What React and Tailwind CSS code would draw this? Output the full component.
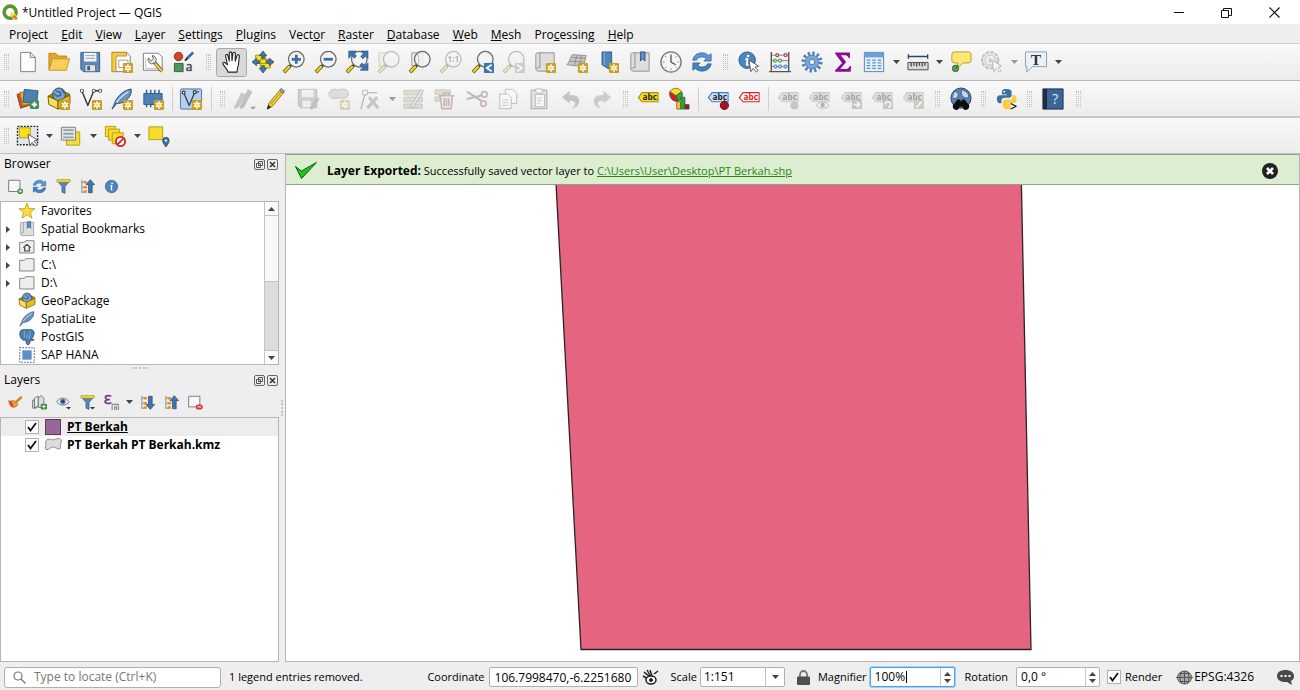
import React, { useState } from 'react';

const Svg = ({ size = 24, children, className = '' }) => (
    <svg
        width={size}
        height={size}
        viewBox="0 0 24 24"
        fill="none"
        strokeLinejoin="round"
        aria-hidden="true"
        className={`shrink-0 overflow-visible ${className}`}
    >
        {children}
    </svg>
);

// shared icon parts
const Star = ({ x = 13, y = 13 }) => (
    <g transform={`translate(${x} ${y})`}>
        <rect width="11" height="11" rx="1.5" fill="#c8a01c" />
        <path d="M5.500 1.500v8M2 3.500l7 4M9 3.500l-7 4" stroke="#fff" strokeWidth="1.700" />
        <circle cx="5.500" cy="5.500" r="0.900" fill="#c8a01c" />
    </g>
);

const Lens = ({ children }) => (
    <>
        <path d="M9 15l-2.500 2.500" stroke="#222" strokeWidth="3" />
        <path d="M7.500 16.500L1 23" stroke="#6b5a10" strokeWidth="4" />
        <path d="M7.500 16.500L1.500 22.500" stroke="#f2d21c" strokeWidth="2.400" />
        <circle cx="14.500" cy="9" r="8.500" fill="#f2f2f2" fillOpacity="0.85" stroke="#6a6a6a" strokeWidth="1.400" />
        {children}
    </>
);

const Scroll = () => (
    <>
        <path d="M4 2h18v20H5.500C3 22 2 21 2 19V4c0-1.300.8-2 2-2z" fill="#dedede" stroke="#8b8b8b" />
        <path d="M6.500 2v16M6.500 18c-2 0-3.500.5-4 2" stroke="#8b8b8b" />
    </>
);

const Page = () => <path d="M4 1.500h10.500l5.500 5.500v15.500H4zM14.500 1.500v5.500H20" fill="#fdfdfd" stroke="#777" />;

const Label = ({ fill, stroke, color = '#222' }) => (
    <>
        <path d="M1.500 10.500L5.500 5h17.500v10H5.500z" fill={fill} stroke={stroke} strokeWidth="1.200" />
        <text x="14" y="13" textAnchor="middle" fontSize="9" fontWeight="700" fill={color}>abc</text>
    </>
);

const Cursor = () => <path d="M12 10l10.500 6.500-4 1 3.500 4-2 1.500-3.500-4-2.500 3.500z" fill="#fff" stroke="#555" />;

const Cube = () => (
    <>
        <path d="M0 9l7-4h13l4 2-12 6z" fill="#b98f0a" stroke="#6e5505" />
        <circle cx="12" cy="7" r="7" fill="#7ba5d0" stroke="#22405e" />
        <path d="M8 2c2 1 2 3 5 2l1 4-4 1-4-3M15 1l2 4 2 1" stroke="#3b658f" strokeWidth="1.500" />
        <path d="M0 9l11 5v9L1 18z" fill="#f9df55" stroke="#6e5505" />
        <path d="M11 14l13-6v9l-13 6z" fill="#e8bd24" stroke="#6e5505" />
    </>
);

const Feather = () => (
    <>
        <path d="M2 22C5 10 12 3 22 1c1 6-3 12-10 15-3 1-5 1-6 1z" fill="#6796c4" stroke="#2a4a6c" />
        <path d="M1 23C6 14 12 8 19 4" stroke="#dce9f5" strokeWidth="1.200" />
        <path d="M1 23l5-7" stroke="#2a4a6c" strokeWidth="1.200" />
    </>
);

const Sync = () => (
    <>
        <path d="M2 10c.5-5 5-8 10-8 3 0 5.500 1 7 3l3-2v8h-8l2.500-2.500C15 7 13.500 6.500 12 6.500 9 6.500 6.500 8 6 10z" fill="#5d96d2" stroke="#2f639c" strokeWidth="0.800" />
        <path d="M22 14c-.5 5-5 8-10 8-3 0-5.500-1-7-3l-3 2v-8h8l-2.500 2.500C9 17 10.500 17.500 12 17.500c3 0 5.500-1.500 6-3.500z" fill="#4680be" stroke="#2f639c" strokeWidth="0.800" />
    </>
);

const Info = ({ r = 9, cx = 10, cy = 10 }) => (
    <>
        <circle cx={cx} cy={cy} r={r} fill="#4d84bd" stroke="#2f5c8c" />
        <circle cx={cx + 1} cy={cy - r / 2} r="1.500" fill="#fff" />
        <path d={`M${cx - 2} ${cy - 1}h2.500l-1 6h2`} stroke="#fff" strokeWidth="2" />
    </>
);

const Funnel = () => (
    <>
        <path d="M2 3h20l-7.500 9v11l-5-2v-9z" fill="#5585b5" stroke="#335a85" />
        <path d="M1.500 1h21v4h-21z" fill="#f5dc3c" stroke="#a58e14" />
    </>
);

const Tree = ({ up }) => (
    <>
        <path d="M3 1v21M3 5h6M3 13h6M3 21h6" stroke="#888" strokeWidth="1.500" />
        <path d="M6 3h5v4H6zM6 11h5v4H6zM6 18h5v4H6z" fill="#ef8b22" />
        <path
            d={up ? 'M16.500 1l7 8h-4v13h-6V9h-4z' : 'M16.500 23l7-8h-4V2h-6v13h-4z'}
            fill="#3f75b0"
            stroke="#1f3f66"
        />
    </>
);

const Folder = () => <path d="M1 5h7l2-2.500h12.500V21H1z" fill="#ededed" stroke="#808080" strokeWidth="1.400" />;

const Bookmark = () => (
    <>
        <Scroll />
        <path d="M12.500 1h5v10L15 8.500 12.500 11z" fill="#5b90c6" stroke="#2d5680" />
    </>
);

const Bolt = () => (
    <>
        <rect x="2" y="6" width="20" height="12" fill="#4e80b6" stroke="#2f5c8c" />
        <path d="M5 2v4M9.500 2v4M14 2v4M18.500 2v4M5 18v3M9.500 18v3" stroke="#2f5c8c" strokeWidth="1.600" />
    </>
);

const icons = {
    newProject: <Page />,
    open: (
        <>
            <path d="M1 20V2.500h7.500L11 5.500h9.500V9" fill="#e0a829" stroke="#b28417" />
            <path d="M1 21L5 8.500h18.500L20 21z" fill="#fbcf55" stroke="#c2922a" />
        </>
    ),
    save: (
        <>
            <path d="M2 1.500h20.500v21H5L2 20z" fill="#5a8ac0" stroke="#34587f" />
            <path d="M5.500 2h13.500v9.500H5.500z" fill="#f4f4f4" />
            <path d="M7 5h10.500M7 8h10.500" stroke="#8aa0b5" />
            <path d="M6.500 15h11.500v7.500H6.500z" fill="#e1e1e1" stroke="#55718f" />
            <path d="M9 16.500h3v4.500H9z" fill="#34587f" />
        </>
    ),
    newLayout: (
        <>
            <path d="M1.500 1.500h15.500l4 4v17h-19.500z" fill="#fff" stroke="#777" />
            <path d="M1 1.500h16v4H5.500v17H1z" fill="#f4cc48" stroke="#b58e17" />
            <path d="M8.500 10h10v8h-10z" stroke="#999" />
            <Star />
        </>
    ),
    layoutManager: (
        <>
            <path d="M1.500 2.500h16.500l4 4v14.500h-20.500z" fill="#fff" stroke="#777" />
            <path d="M4 7v12h13" stroke="#bbb" />
            <path d="M13 12l9 10" stroke="#7b6414" strokeWidth="4" />
            <path d="M14 13.500l8 8.500" stroke="#f3d252" strokeWidth="2.200" />
            <path d="M7 7.500a4.500 4.500 0 0 0 6 6l2-2a4.500 4.500 0 0 0-4-6.500l1.500 3.500-2.500 2.500z" fill="#e8e8e8" stroke="#555" />
        </>
    ),
    styleManager: (
        <>
            <circle cx="6" cy="6" r="4.600" fill="#cf4528" stroke="#8d2c16" />
            <rect x="1.500" y="13.500" width="9.500" height="9" fill="#4f9560" stroke="#2d5c3a" />
            <path d="M15 8.500L22 1.500" stroke="#3c6a9d" strokeWidth="3" />
            <path d="M13 10.500l2.500-2.500" stroke="#222" strokeWidth="2" />
            <text x="17.500" y="22" textAnchor="middle" fontSize="13" fill="#444" stroke="#444" strokeWidth="0.500">a</text>
        </>
    ),
    pan: (
        <path
            d="M7.500 23c0-3-4-5.500-5.500-9-.4-1.500 1.700-2.200 2.700-1L7 15 5 5.500C4.700 3.700 7 3.200 7.600 5L9 11V2.500c0-2 2.700-2 2.700 0l.3 8 1-8c.2-1.700 2.700-1.500 2.700.3L15.500 11l2-6c.5-1.600 2.900-1 2.600.7C19 11 20 14 18 18.500L17.500 23z"
            fill="#fff"
            stroke="#222"
            strokeWidth="1.200"
        />
    ),
    panSelection: (
        <>
            <path d="M4 4.500h11v9H4zM9 9h11v9.500H9z" fill="#f7e11e" stroke="#a3900c" />
            <path d="M12 0l4 5h-2.500v3h-3V5H8zM12 24l-4-5h2.500v-3h3v3H16zM0 12l5-4v2.500h3v3H5V16zM24 12l-5-4v2.500h-3v3h3V16z" fill="#4377b1" stroke="#23466f" strokeWidth="0.800" />
        </>
    ),
    zoomIn: <Lens><path d="M14.500 4v10M9.500 9h10" stroke="#3a6ea8" strokeWidth="3" /></Lens>,
    zoomOut: <Lens><path d="M9.500 9h10" stroke="#3a6ea8" strokeWidth="3" /></Lens>,
    zoomFull: (
        <>
            <Lens />
            <path d="M3 0h8L8.500 2.500l3 3-2.500 2.500-3-3L3 8zM24 0v8l-2.500-2.500-3 3L16 6l3-3-2.500-3zM24 21h-8.500l2.500-2.500-3-3 2.500-2.500 3 3 3.500-3z" fill="#3f75b0" stroke="#25507f" strokeWidth="0.700" />
        </>
    ),
    zoomSelection: <><path d="M1 2h12v15H1z" fill="#f0e6a4" stroke="#aaa06a" /><Lens /></>,
    zoomLayer: <><path d="M3 2h12v14H3z" fill="#e9e9e9" stroke="#999" /><Lens /><path d="M10.500 2.500v13" stroke="#bbb" /></>,
    zoomNative: <Lens><text x="14.500" y="12" textAnchor="middle" fontSize="9" fontWeight="700" fill="#555">1:1</text></Lens>,
    zoomLast: <Lens><rect x="13" y="13" width="11" height="11" fill="#3f75b0" /><path d="M21.500 15l-5.500 3.500 5.500 3.500" stroke="#fff" strokeWidth="2" /></Lens>,
    zoomNext: <Lens><rect x="13" y="13" width="11" height="11" fill="#9a9a9a" /><path d="M15.500 15l5.500 3.500-5.500 3.500" stroke="#fff" strokeWidth="2" /></Lens>,
    newMapView: <><Scroll /><Star /></>,
    new3d: (
        <>
            <path d="M7 4l15 1-3 12L1 15c3-2 3-8 6-11z" fill="#c9c9c9" stroke="#8b8b8b" />
            <path d="M4 11l16 1M6 7l16 1M12 4.500L9 16M17 5l-3 12" stroke="#8b8b8b" />
            <Star />
        </>
    ),
    newBookmark: <><path d="M5.500 1h10.500v20l-5-2.500L5.500 15z" fill="#4f84bc" stroke="#2f5a88" /><path d="M8 1.500v14" stroke="#8fb4da" /><Star /></>,
    bookmarks: <Bookmark />,
    clock: (
        <>
            <circle cx="12" cy="12" r="11" fill="#f5f5f5" stroke="#777" strokeWidth="1.500" />
            <path d="M12 3v2M12 19v2M3 12h2M19 12h2M5.500 5.500l1.400 1.400M17 17l1.400 1.400M18.500 5.500L17 7M7 17l-1.500 1.500" stroke="#888" />
            <path d="M12 4.500V12l5 3" stroke="#444" strokeWidth="1.300" />
        </>
    ),
    refresh: <Sync />,
    identify: <><Info /><Cursor /></>,
    abacus: (
        <>
            <path d="M2.500 1v21M21.500 1v21M0 22.500h24" stroke="#555" strokeWidth="1.500" />
            <path d="M3 4.500h18M3 10.500h18M3 17h18" stroke="#777" />
            <path d="M9 4.500h0M18 4.500h0" stroke="#cf4040" strokeWidth="4.500" strokeLinecap="round" />
            <path d="M6.500 10.500h0M12 10.500h0" stroke="#56a860" strokeWidth="4.500" strokeLinecap="round" />
            <path d="M7 17h0M12 17h0M18 17h0" stroke="#578bc4" strokeWidth="4.500" strokeLinecap="round" />
            <path d="M9 4.500h0M18 4.500h0M6.500 10.500h0M12 10.500h0M7 17h0M12 17h0M18 17h0" stroke="#f1f1f1" strokeWidth="1.800" strokeLinecap="round" />
        </>
    ),
    gear: (
        <>
            <circle cx="12" cy="12" r="9.500" stroke="#4b7fb8" strokeWidth="4" strokeDasharray="2.490 2.490" />
            <circle cx="12" cy="12" r="7.500" fill="#7aa7d8" stroke="#4679b3" />
            <circle cx="12" cy="12" r="3" fill="#f3f3f3" stroke="#4679b3" />
        </>
    ),
    sigma: <path d="M3.500 1.500h16v6h-1.500c-.5-2-1.500-3-3.500-3H9.500l6 7.500-6.500 7.500h6.500c2 0 3-1 3.500-3H21l-.7 6H3.500v-1.500L11 13 3.500 3z" fill="#8d0b96" />,
    table: (
        <>
            <rect x="1.500" y="1.500" width="21" height="21" fill="#e8f1fb" stroke="#4c7fb5" />
            <path d="M2 2h20v5H2z" fill="#6d9ed4" />
            <path d="M4 10h4M10 10h4M16 10h4M4 13h4M10 13h4M16 13h4M4 16h4M10 16h4M16 16h4M4 19h4M10 19h4M16 19h4" stroke="#5c8ec3" strokeWidth="1.500" />
        </>
    ),
    measure: (
        <>
            <path d="M1.500 6h21M1.500 3.500v5M22.500 3.500v5" stroke="#24476f" strokeWidth="1.500" />
            <path d="M1 12.500h22v8H1z" fill="#d8d8d8" stroke="#444" />
            <path d="M4.500 13v4M7.500 13v3M10.500 13v4M13.500 13v3M16.500 13v4M19.500 13v3" stroke="#333" strokeWidth="1.200" />
        </>
    ),
    mapTip: (
        <>
            <path d="M5 1h15a3 3 0 0 1 3 3v6a3 3 0 0 1-3 3h-6l-7 7 1.500-7H5a3 3 0 0 1-3-3V4a3 3 0 0 1 3-3z" fill="#fbe976" stroke="#b39b1c" />
            <circle cx="6" cy="19" r="3.500" fill="#57a05b" stroke="#2d6332" />
            <path d="M6 19l3-4" stroke="#2d6332" />
        </>
    ),
    action: (
        <>
            <circle cx="10" cy="10" r="9" fill="#cfcfcf" stroke="#777" strokeWidth="2" strokeDasharray="4 1.300" />
            <circle cx="10" cy="10" r="5.500" fill="#eee" stroke="#777" />
            <path d="M8.500 7l5 3-5 3z" fill="#888" />
            <Cursor />
        </>
    ),
    annotation: (
        <>
            <path d="M.5 1h23v16H8l-6 6v-6H.5z" fill="#eaf3fb" stroke="#8a98a6" />
            <text x="12" y="15" textAnchor="middle" fontSize="17" fontWeight="700" fill="#333" className="font-['Liberation_Serif',serif]">T</text>
        </>
    ),
    dataSource: (
        <>
            <path d="M0 7l12-3 4 14-12 4z" fill="#d45226" stroke="#8e3314" />
            <path d="M3 5l13-2 3 14-13 2z" fill="#e9b32c" stroke="#94701a" />
            <path d="M8 1.500l15 1.500-1.500 14-15-1.500z" fill="#4e80b6" stroke="#2f5c8c" />
            <rect x="14" y="13" width="10" height="10" rx="2" fill="#3f8a56" />
            <path d="M19 15v6M16 18h6" stroke="#fff" strokeWidth="2" />
        </>
    ),
    newGeopackage: <><Cube /><Star /></>,
    newShape: (
        <>
            <path d="M2 3L8.500 19 15 3h7" stroke="#333" strokeWidth="1.500" />
            <path d="M2 3h0M15 3h0M22 3h0" stroke="#444" strokeWidth="4.500" strokeLinecap="round" />
            <path d="M2 3h0M15 3h0M22 3h0" stroke="#fff" strokeWidth="2.500" strokeLinecap="round" />
            <Star />
        </>
    ),
    newSpatialite: <><Feather /><Star /></>,
    newMemory: <><Bolt /><Star /></>,
    newVirtual: (
        <>
            <rect x=".5" y="1" width="23" height="22" rx="1.500" fill="#b5d0ea" stroke="#4a6f96" />
            <path d="M4 5l6 14 6-14 4.500-1" stroke="#34495e" strokeWidth="1.500" />
            <path d="M4 5h0M16 4.500h0" stroke="#23394f" strokeWidth="4.500" strokeLinecap="round" />
            <path d="M4 5h0M16 4.500h0" stroke="#fff" strokeWidth="2" strokeLinecap="round" />
            <Star />
        </>
    ),
    edits: (
        <>
            <path d="M0 21L8 5l5 2-8 14-4 2z" fill="#888" />
            <path d="M6 21L15 1l5 3-9 17-4 2z" fill="#777" />
            <path d="M17.500 20.500H24l-3.200 3z" fill="#222" />
        </>
    ),
    pencil: (
        <>
            <path d="M4 17L16 2.500l4 3L8 20l-5 2z" fill="#f3d234" stroke="#8c7414" />
            <path d="M6 18L18 4" stroke="#a98b12" />
            <path d="M16 2.500l1.500-2 4 3L20 5.500z" fill="#aaa" stroke="#666" />
            <path d="M2.500 23l1.500-4 2 2z" fill="#222" stroke="#222" />
        </>
    ),
    saveEdits: (
        <>
            <path d="M1.500 1.500h20v20H4l-2.500-2.500z" fill="#999" stroke="#666" />
            <path d="M5 2h13v8H5zM6 14h9v7H6z" fill="#eee" />
            <path d="M15 23l8-12" stroke="#777" strokeWidth="3.500" />
        </>
    ),
    addPolygon: (
        <>
            <path d="M4 2c4-2 6 1 10-.5s9 1 8 5.500-4 5-8 4-6 2-10 0S0 4 4 2z" fill="#bbb" stroke="#777" />
            <Star />
        </>
    ),
    vertex: (
        <>
            <path d="M2 23L7 5h13" stroke="#666" strokeWidth="1.500" />
            <rect x="4" y="2.500" width="5" height="5" fill="#fff" stroke="#555" />
            <path d="M9 22l11-12M11 10l10 12" stroke="#888" strokeWidth="3.500" />
        </>
    ),
    attributes: (
        <>
            <path d="M1 2.500h20v5H1zM1 10h20v5H1zM1 17.500h20V22H1z" fill="#bdbd92" stroke="#858560" />
            <path d="M9 22L21 2" stroke="#666" strokeWidth="4" />
            <path d="M9.500 21L20.500 3" stroke="#ddd" strokeWidth="2" />
        </>
    ),
    trash: (
        <>
            <path d="M1 2h17v5H1zM1 9.500h5v5H1z" fill="#c3bb86" stroke="#9a9370" />
            <path d="M5 8.500h17M7 9l1.500 13.500h10L20 9M10.500 8V5.500h6V8M11 11v9M13.500 11v9M16 11v9" stroke="#a85555" strokeWidth="1.800" />
        </>
    ),
    cut: (
        <>
            <path d="M1 4l16 10M1 12l17-4" stroke="#666" strokeWidth="2.200" />
            <circle cx="20" cy="7" r="3" stroke="#b05c5c" strokeWidth="2" />
            <circle cx="19" cy="17" r="3" stroke="#b05c5c" strokeWidth="2" />
        </>
    ),
    copy: (
        <>
            <path d="M9 1.500h8l4.500 4.500v11H9z" fill="#fff" stroke="#666" />
            <path d="M3 6.500h8.500l4 4v12H3z" fill="#fff" stroke="#666" />
            <path d="M5.500 13h7M5.500 16h7M5.500 19h7" stroke="#888" />
        </>
    ),
    paste: (
        <>
            <rect x="3.500" y="2.500" width="17" height="20" fill="#ccc" stroke="#666" strokeWidth="1.500" />
            <path d="M8 7h10v13.500H8zM8.500 1h7v4.500h-7z" fill="#fff" stroke="#666" />
            <path d="M10 11h5M10 14h5M10 17h3" stroke="#888" />
        </>
    ),
    undo: <path d="M2 10l8.500-7v4.500c9 0 10.500 3 10.500 7s-3 7.500-8.500 7.500c3-1.500 4-3 4-5s-2-3-6-3V17z" fill="#9a7a76" />,
    redo: <path d="M22 10l-8.500-7v4.500C4.500 7.500 3 10.500 3 14.500S6 22 11.500 22c-3-1.500-4-3-4-5s2-3 6-3V17z" fill="#8d9a86" />,
    label: <Label fill="#f8dd22" stroke="#a98f0e" />,
    diagram: (
        <>
            <path d="M8.500 8.500L2 4a7.500 7.500 0 0 1 13 0z" fill="#f7e11e" stroke="#444" strokeWidth="0.700" />
            <path d="M8.500 8.500L15 4c2 4 0 9-4 10.500z" fill="#28a733" stroke="#444" strokeWidth="0.700" />
            <path d="M8.500 8.500L11 14.500C4 15.500.5 8.500 2 4z" fill="#d32222" stroke="#444" strokeWidth="0.700" />
            <path d="M9.500 15H14v8H9.500z" fill="#f7c51e" stroke="#444" strokeWidth="0.700" />
            <path d="M14 10h4.500v13H14z" fill="#28a733" stroke="#444" strokeWidth="0.700" />
            <path d="M18.500 18H23v5h-4.500z" fill="#a31818" stroke="#444" strokeWidth="0.700" />
        </>
    ),
    labelPin: (
        <>
            <Label fill="#cbe2fa" stroke="#3a7fc9" />
            <path d="M19 12v5" stroke="#555" strokeWidth="1.500" />
            <circle cx="19" cy="19" r="4.500" fill="#a31520" stroke="#6b0d14" />
        </>
    ),
    labelRed: <Label fill="#fff" stroke="#e02020" color="#e02020" />,
    labelA: <><Label fill="#c4c2aa" stroke="#99977f" /><circle cx="19" cy="19" r="4.500" fill="#888" /></>,
    labelB: <><Label fill="#c4c2aa" stroke="#99977f" /><path d="M9 19c4-5 10-5 14 0-4 4-10 4-14 0z" fill="#fff" stroke="#555" /><circle cx="16" cy="18.500" r="2.500" fill="#555" /></>,
    labelC: <><Label fill="#c4c2aa" stroke="#99977f" /><rect x="13" y="13" width="11" height="10" rx="1" fill="#888" /><path d="M15 18h6M18.500 15l3 3-3 3" stroke="#fff" strokeWidth="1.800" /></>,
    labelD: <><Label fill="#c4c2aa" stroke="#99977f" /><rect x="13" y="13" width="11" height="10" rx="1" fill="#888" /><path d="M18.500 21a3 3 0 1 0-3-3" stroke="#fff" strokeWidth="1.800" /></>,
    labelE: <><Label fill="#c4c2aa" stroke="#99977f" /><rect x="13" y="13" width="11" height="10" rx="1" fill="#9a9a80" /><path d="M16 21l5-6" stroke="#fff" strokeWidth="2" /></>,
    metasearch: (
        <>
            <circle cx="12" cy="11" r="11" fill="#5c82b0" stroke="#2b3f5c" />
            <path d="M5 4c4 0 5 3 3 6s-4 0-5 2M13 1c2 3 6 2 7 6s-2 5-5 3-3-5-2-9z" fill="#c5d6ea" stroke="#31507a" />
            <path d="M5 23.500a4 4 0 0 1 0-7l3-4h3l1 3 1-3h3l3 4a4 4 0 0 1 0 7c-3 1-5 0-5.500-3h-3c-.5 3-2.500 4-5.500 3z" fill="#0b0b0b" />
        </>
    ),
    python: (
        <>
            <path d="M11 1C7 1 6.500 2.500 6.500 4.500V7H12v1H4C1.500 8 1 10.500 1 12s.5 4.500 3 4.500h2v-3c0-2 1.500-3 3.500-3h5c1.500 0 2.500-1 2.500-2.500v-4C17 2 15 1 11 1z" fill="#3870a3" />
            <path d="M12.500 23c4 0 4.500-1.500 4.500-3.500v-2h-5v-1h7c2.500 0 3.500-2 3.500-4.500s-1-4.500-3.500-4.500h-1V10c0 2-1.500 2.500-3 2.500h-5c-1.500 0-2.500 1-2.500 2.500v4.500c0 2 2 3.500 5 3.500z" fill="#f8cc3c" />
            <circle cx="9" cy="4" r="1" fill="#fff" />
            <path d="M16 17l6 3-6 3" stroke="#111" strokeWidth="1.300" fill="#fff" />
        </>
    ),
    help: (
        <>
            <rect x="1" y="1" width="22" height="22" fill="#3a6596" stroke="#1d2e42" />
            <path d="M1 1h4.500v22H1z" fill="#1d2e42" />
            <text x="14.500" y="17.500" textAnchor="middle" fontSize="15" fill="#dce8f5">?</text>
        </>
    ),
    select: (
        <>
            <rect x=".5" y="1.500" width="22" height="20" fill="#dfe6ee" stroke="#222" strokeWidth="1.500" strokeDasharray="2 1.500" />
            <path d="M2.500 3h12v11h-12z" fill="#f7e11e" stroke="#b29d12" />
            <Cursor />
        </>
    ),
    selectForm: (
        <>
            <path d="M7 7.500h14.500V22H7z" fill="#f7dc2e" stroke="#b29d12" />
            <path d="M1.500 2.500h15.500v14H1.500z" fill="#e4e8ec" stroke="#777" />
            <path d="M3.500 5.500h11.500M3.500 9.500h11.500M3.500 13.500h11.500" stroke="#9a9fa5" strokeWidth="2" />
        </>
    ),
    deselect: (
        <>
            <path d="M1.500 1.500h11v11h-11z" fill="#f7dc2e" stroke="#b29d12" />
            <path d="M5 4.500h12v12H5z" fill="#f7dc2e" stroke="#b29d12" />
            <path d="M9 8.500h12v12H9z" fill="#f7dc2e" stroke="#b29d12" />
            <circle cx="18" cy="18" r="5" fill="#fff" stroke="#d42525" strokeWidth="2" />
            <path d="M14.500 21.500l7-7" stroke="#d42525" strokeWidth="2" />
        </>
    ),
    selectLocation: (
        <>
            <path d="M1 2h15v14H1z" fill="#f7dc2e" stroke="#b29d12" />
            <path d="M19.500 24c-1.500-3-3.500-4-3.500-7a3.500 3.500 0 0 1 7 0c0 3-2 4-3.500 7z" fill="#40709f" stroke="#24486d" />
            <circle cx="19.500" cy="17" r="1.300" fill="#fff" />
        </>
    ),
    addLayer: (
        <>
            <path d="M1 2h18v18H1z" fill="#f8f8f8" stroke="#777" strokeWidth="1.500" />
            <circle cx="19.500" cy="19.500" r="4.500" fill="#3f8a46" />
            <path d="M19.500 17v5M17 19.500h5" stroke="#fff" strokeWidth="1.500" />
        </>
    ),
    filter: <Funnel />,
    collapse: <Tree up />,
    expand: <Tree />,
    info: <Info r={10} cx={12} cy={12} />,
    star: <path d="M12 0l3 8.500h9l-7 5.500L19.500 23 12 17.500 4.500 23 7 14 0 8.500h9z" fill="#fbe13a" stroke="#c39a10" strokeWidth="1.300" />,
    folder: <Folder />,
    home: <><Folder /><path d="M6.500 13L12 8l5.500 5M8.500 12.500V18h7v-5.500" stroke="#444" strokeWidth="1.800" /></>,
    geopackage: <Cube />,
    feather: <Feather />,
    postgis: (
        <>
            <path d="M3 2c3-2 7-1 9-1s8-1 10 2 0 8-3 12l4 1c-2 2-5 2-6 1l-1 5c-1 2-4 2-5 0l-1-6c-2 2-5 1-7-2S0 5 3 2z" fill="#4a7db0" stroke="#22415f" />
            <path d="M9 3c-2 3-1 8 0 10M15 3c3 3 1 8 0 12M12 8v6" stroke="#9bbcdc" strokeWidth="1.200" />
        </>
    ),
    hana: (
        <>
            <rect x="5" y="5" width="14" height="14" fill="#5b8fc9" />
            <rect x="1" y="1" width="22" height="22" stroke="#355d8a" strokeWidth="2" strokeDasharray="1.800 2.600" />
        </>
    ),
    brush: (
        <>
            <path d="M12 12l10-9" stroke="#c58a20" strokeWidth="4" />
            <path d="M1 9c4 2 6-1 9 0l6 6c-2 4-7 6-10 4S2 14 1 9z" fill="#f09a34" stroke="#c25a1a" />
            <path d="M1 9l4 9 4 1-3-8z" fill="#d8421c" />
        </>
    ),
    addGroup: (
        <>
            <path d="M1 8h6v13H1z" fill="#ddd" stroke="#666" strokeWidth="1.300" />
            <path d="M4 5l6-3v16l-6 2z" fill="#eee" stroke="#666" strokeWidth="1.300" />
            <path d="M10 5l5-4 4 4v15h-9z" fill="#ddd" stroke="#666" strokeWidth="1.300" />
            <rect x="14" y="14" width="10" height="9" rx="2" fill="#3f8a46" />
            <path d="M19 15.500v6M16 18.500h6" stroke="#fff" strokeWidth="1.500" />
        </>
    ),
    eye: (
        <>
            <path d="M1 11c5-8 15-8 20 0-5 7-15 7-20 0z" fill="#e8eef4" stroke="#666" strokeWidth="1.300" />
            <circle cx="11" cy="10.500" r="4.500" fill="#5182b3" />
            <circle cx="11" cy="10.500" r="2" fill="#1c2f42" />
            <path d="M16 19h8l-4 4z" fill="#333" />
        </>
    ),
    funnelMenu: <><Funnel /><path d="M16 19h8l-4 4z" fill="#333" /></>,
    expression: (
        <>
            <text x="6" y="15" textAnchor="middle" fontSize="27" fill="#75306f" stroke="#75306f" strokeWidth="0.600">ε</text>
            <path d="M13 24v-9h10v9M17 24v-5h3v5" stroke="#888" strokeWidth="1.800" />
        </>
    ),
    removeLayer: (
        <>
            <path d="M1 2h18v17H1z" fill="#f8f8f8" stroke="#777" strokeWidth="1.500" />
            <rect x="12.500" y="15" width="11" height="8" rx="4" fill="#d72c3a" />
            <path d="M15 19h6" stroke="#fff" strokeWidth="1.800" />
        </>
    ),
    polygon: <path d="M2 5c3-4 7 0 11-1s9-3 11 0-1 5-1 8 1 6-2 6-5-3-9-3-6 4-9 4-3-3-2-6-1-5 1-8z" fill="#dcdcdc" stroke="#888" strokeWidth="1.400" />,
};

const Icon = ({ name, size, className }) => <Svg size={size} className={className}>{icons[name]}</Svg>;

const Caret = ({ className = 'text-[#444]' }) => (
    <svg width="7" height="4" viewBox="0 0 7 4" aria-hidden="true" className={`shrink-0 ${className}`}>
        <path d="M0 0h7L3.500 4z" fill="currentColor" />
    </svg>
);

const Handle = ({ className = 'w-[15px]' }) => (
    <div className={`flex shrink-0 justify-center gap-px ${className}`}>
        <span className="h-4 border-l border-dotted border-[#c0c0c0]" />
        <span className="h-4 border-l border-dotted border-[#c0c0c0]" />
        <span className="h-4 border-l border-dotted border-[#c0c0c0]" />
    </div>
);

const Divider = ({ className = 'w-[6px]' }) => (
    <div className={`flex shrink-0 justify-center ${className}`}>
        <span className="h-6 w-px bg-[#d0d0d0]" />
    </div>
);

const Tools = ({ names, off = [], active, className }) => (
    <div className={`flex shrink-0 ${className}`}>
        {names.map((name) => (
            <button
                key={name}
                type="button"
                aria-label={name}
                disabled={off.includes(name)}
                className={`flex h-[29px] min-w-0 flex-1 items-center justify-center rounded-[3px] border ${
                    active === name ? 'border-[#a9a9a9] bg-[#d9d9d9]' : 'border-transparent'
                }`}
            >
                <Icon name={name} size={22} className={off.includes(name) ? 'opacity-40 saturate-50' : ''} />
            </button>
        ))}
    </div>
);

const Drop = ({ off, className = 'w-3' }) => (
    <button type="button" aria-label="More" disabled={off} className={`flex h-7 shrink-0 items-center justify-center ${className}`}>
        <Caret className={off ? 'text-[#999]' : 'text-[#444]'} />
    </button>
);

const Toolbar = ({ label, className = '', children }) => (
    <div
        role="toolbar"
        aria-label={label}
        className={`flex shrink-0 items-center overflow-hidden bg-linear-to-b from-[#f9f9f9] to-[#ececec] ${className}`}
    >
        {children}
    </div>
);

// [text before the mnemonic, mnemonic, text after]
const menus = [
    ['Pro', 'j', 'ect'],
    ['', 'E', 'dit'],
    ['', 'V', 'iew'],
    ['', 'L', 'ayer'],
    ['', 'S', 'ettings'],
    ['', 'P', 'lugins'],
    ['Vect', 'o', 'r'],
    ['', 'R', 'aster'],
    ['', 'D', 'atabase'],
    ['', 'W', 'eb'],
    ['', 'M', 'esh'],
    ['Pro', 'c', 'essing'],
    ['', 'H', 'elp'],
];

const browserItems = [
    { label: 'Favorites', icon: 'star' },
    { label: 'Spatial Bookmarks', icon: 'bookmarks', branch: true },
    { label: 'Home', icon: 'home', branch: true },
    { label: 'C:\\', icon: 'folder', branch: true },
    { label: 'D:\\', icon: 'folder', branch: true },
    { label: 'GeoPackage', icon: 'geopackage' },
    { label: 'SpatiaLite', icon: 'feather' },
    { label: 'PostGIS', icon: 'postgis' },
    { label: 'SAP HANA', icon: 'hana' },
];

const PanelTitle = ({ title }) => (
    <div className="flex h-5 shrink-0 items-center gap-[2px] pr-px pl-1">
        <h2 className="flex-1">{title}</h2>
        <button type="button" aria-label={`Float ${title}`} className="flex h-[11px] w-[11px] items-center justify-center rounded-[2px] border border-[#666]">
            <svg width="7" height="7" viewBox="0 0 7 7" fill="none" stroke="#555">
                <path d="M2.500.5h4v4h-4zM.5 2.500h4v4h-4z" />
            </svg>
        </button>
        <button type="button" aria-label={`Close ${title}`} className="flex h-[11px] w-[11px] items-center justify-center rounded-[2px] border border-[#666]">
            <svg width="7" height="7" viewBox="0 0 7 7" stroke="#333" strokeWidth="1.500">
                <path d="M1 1l5 5M6 1L1 6" />
            </svg>
        </button>
    </div>
);

const PanelTool = ({ name }) => (
    <button type="button" aria-label={name} className="flex h-6 w-6 shrink-0 items-center justify-center">
        <Icon name={name} size={15} />
    </button>
);

const CheckBox = ({ checked, onChange, label, children }) => (
    <label className="flex shrink-0 items-center gap-1">
        <span className="relative flex h-[14px] w-[14px] items-center justify-center">
            <input
                type="checkbox"
                aria-label={label}
                checked={checked}
                onChange={onChange}
                className="h-[14px] w-[14px] appearance-none border border-[#b0b0b0] bg-white"
            />
            {checked && (
                <svg width="10" height="10" viewBox="0 0 10 10" fill="none" stroke="#111" strokeWidth="1.800" className="pointer-events-none absolute">
                    <path d="M1 5l2.500 3.500L9 1" />
                </svg>
            )}
        </span>
        {children}
    </label>
);

const SpinBox = ({ id, value, onChange, focused, className }) => (
    <div className={`relative flex h-5 shrink-0 rounded-[2px] border bg-white text-xs ${focused ? 'border-[#4aa0e8] ring-1 ring-[#a5d0f5]' : 'border-[#b0b0b0]'} ${className}`}>
        <input id={id} value={value} onChange={onChange} className="w-full min-w-0 flex-1 bg-transparent pl-1 outline-none" />
        <div className="flex w-[14px] flex-col items-center justify-center gap-[3px] border-l border-[#c8c8c8]">
            <button type="button" aria-label="Increase"><Caret className="rotate-180 text-[#444]" /></button>
            <button type="button" aria-label="Decrease"><Caret /></button>
        </div>
        {focused && <span className="absolute top-[3px] left-[35px] h-3 w-px bg-black" />}
    </div>
);

const App = () => {
    const [magnifier, setMagnifier] = useState('100%');
    const [rotation, setRotation] = useState('0,0 °');
    const [render, setRender] = useState(true);
    const [showMessage, setShowMessage] = useState(true);
    const [visible, setVisible] = useState({ shp: true, kmz: true });

    const toggleLayer = (id) => setVisible({ ...visible, [id]: !visible[id] });

    return (
        <div className="flex h-screen flex-col overflow-hidden bg-[#eeeeee] font-['Open_Sans','Noto_Sans',sans-serif] text-xs text-black [&_button]:leading-none">
            <header className="flex h-6 shrink-0 items-center bg-white pt-px">
                <svg width="17" height="17" viewBox="0 0 24 24" fill="none" className="ml-[2px]">
                    <circle cx="11.500" cy="11.500" r="8.500" stroke="#589632" strokeWidth="5" />
                    <path d="M12 12h4l6 7v3.500h-3.500L12 16z" fill="#ee7913" stroke="#fff" />
                    <path d="M12 12h4.500l2 2.500-3.500 3-3-2z" fill="#f0e64a" />
                </svg>
                <h1 className="ml-[3px] flex-1">*Untitled Project — QGIS</h1>
                <div className="flex items-center gap-[37px] pr-5">
                    <button type="button" aria-label="Minimize">
                        <svg width="10" height="10" viewBox="0 0 10 10" stroke="#111"><path d="M0 4.500h10" /></svg>
                    </button>
                    <button type="button" aria-label="Restore">
                        <svg width="11" height="10" viewBox="0 0 11 10" fill="none" stroke="#111">
                            <path d="M.5 2.500h7v7h-7zM2.500 2.500v-2h8v7h-3" />
                        </svg>
                    </button>
                    <button type="button" aria-label="Close window">
                        <svg width="11" height="11" viewBox="0 0 11 11" stroke="#111" strokeWidth="1.200"><path d="M.5.5l10 10M10.500.5l-10 10" /></svg>
                    </button>
                </div>
            </header>

            <nav className="flex h-5 shrink-0 items-center gap-[13px] border-b border-[#cfcfcf] pt-[2px] pl-[9px]">
                {menus.map(([pre, key, post]) => (
                    <button key={pre + key + post} type="button">
                        {pre}<span className="underline">{key}</span>{post}
                    </button>
                ))}
            </nav>

            <Toolbar label="Project and navigation" className="h-[37px] border-b border-[#b8b8b8]">
                <Handle className="w-3" />
                <Tools className="w-[188px]" names={['newProject', 'open', 'save', 'newLayout', 'layoutManager', 'styleManager']} />
                <Handle className="w-4" />
                <Tools
                    className="w-[502px]"
                    active="pan"
                    off={['zoomSelection', 'zoomNative', 'zoomNext']}
                    names={[
                        'pan', 'panSelection', 'zoomIn', 'zoomOut', 'zoomFull', 'zoomSelection', 'zoomLayer', 'zoomNative',
                        'zoomLast', 'zoomNext', 'newMapView', 'new3d', 'newBookmark', 'bookmarks', 'clock', 'refresh',
                    ]}
                />
                <Handle />
                <Tools className="w-[157px]" names={['identify', 'abacus', 'gear', 'sigma', 'table']} />
                <Drop />
                <Tools className="w-[31px]" names={['measure']} />
                <Drop />
                <Tools className="w-[63px]" names={['mapTip', 'action']} off={['action']} />
                <Drop off />
                <Tools className="w-8" names={['annotation']} />
                <Drop />
            </Toolbar>

            <Toolbar label="Layers, editing and labels" className="h-[37px] border-b-2 border-[#c8c8c8]">
                <Handle className="w-3" />
                <Tools className="w-[157px]" names={['dataSource', 'newGeopackage', 'newShape', 'newSpatialite', 'newMemory']} />
                <Divider />
                <Tools className="w-[31px]" names={['newVirtual']} />
                <Divider className="w-[10px]" />
                <Handle className="w-[13px]" />
                <Tools
                    className="w-[157px]"
                    off={['edits', 'saveEdits', 'addPolygon', 'vertex']}
                    names={['edits', 'pencil', 'saveEdits', 'addPolygon', 'vertex']}
                />
                <Drop off />
                <Tools
                    className="w-[220px]"
                    off={['attributes', 'trash', 'cut', 'copy', 'paste', 'undo', 'redo']}
                    names={['attributes', 'trash', 'cut', 'copy', 'paste', 'undo', 'redo']}
                />
                <Handle className="w-[14px]" />
                <Tools className="w-[63px]" names={['label', 'diagram']} />
                <Divider className="w-[7px]" />
                <Tools className="w-[63px]" names={['labelPin', 'labelRed']} />
                <Divider className="w-[7px]" />
                <Tools
                    className="w-[157px]"
                    off={['labelA', 'labelB', 'labelC', 'labelD', 'labelE']}
                    names={['labelA', 'labelB', 'labelC', 'labelD', 'labelE']}
                />
                <Handle className="w-4" />
                <Tools className="w-[31px]" names={['metasearch']} />
                <Handle />
                <Tools className="w-[31px]" names={['python']} />
                <Handle />
                <Tools className="w-[31px]" names={['help']} />
                <Handle className="w-5" />
            </Toolbar>

            <Toolbar label="Selection" className="h-9 border-b border-[#c0c0c0]">
                <Handle className="w-3" />
                <Tools className="w-[31px]" names={['select']} />
                <Drop />
                <Tools className="w-8" names={['selectForm']} />
                <Drop />
                <Tools className="w-8" names={['deselect']} />
                <Drop />
                <Tools className="w-[31px]" names={['selectLocation']} />
            </Toolbar>

            <main className="flex min-h-0 flex-1">
                <aside className="flex w-[279px] shrink-0 flex-col">
                    <section className="flex shrink-0 flex-col">
                        <PanelTitle title="Browser" />
                        <div className="flex h-[27px] shrink-0 items-center pb-[3px] pl-[3px]">
                            <PanelTool name="addLayer" />
                            <PanelTool name="refresh" />
                            <PanelTool name="filter" />
                            <PanelTool name="collapse" />
                            <PanelTool name="info" />
                        </div>
                        <div className="flex border border-[#b5b5b5] bg-white">
                            <ul className="min-w-0 flex-1">
                                {browserItems.map((item) => (
                                    <li key={item.label} className="flex h-[18px] items-center">
                                        <span className="flex w-[18px] shrink-0 pl-[5px]">
                                            {item.branch && (
                                                <svg width="4" height="7" viewBox="0 0 4 7"><path d="M0 0l4 3.500L0 7z" fill="#444" /></svg>
                                            )}
                                        </span>
                                        <Icon name={item.icon} size={16} />
                                        <span className="ml-[6px]">{item.label}</span>
                                    </li>
                                ))}
                            </ul>
                            <div className="flex w-[14px] shrink-0 flex-col border-l border-[#c4c4c4] bg-[#dcdcdc]">
                                <button type="button" aria-label="Scroll up" className="flex h-[14px] items-center justify-center border-b border-[#c4c4c4] bg-[#fafafa]">
                                    <Caret className="rotate-180 text-[#444]" />
                                </button>
                                <div className="h-[66px] border-b border-[#c4c4c4] bg-[#f8f8f8]" />
                                <div className="flex-1" />
                                <button type="button" aria-label="Scroll down" className="flex h-[14px] items-center justify-center border-t border-[#c4c4c4] bg-[#fafafa]">
                                    <Caret />
                                </button>
                            </div>
                        </div>
                    </section>

                    <div className="flex h-[5px] shrink-0 items-center justify-center">
                        <span className="w-4 border-t-2 border-dotted border-[#c4c4c4]" />
                    </div>

                    <section className="flex min-h-0 flex-1 flex-col">
                        <PanelTitle title="Layers" />
                        <div className="flex h-[27px] shrink-0 items-center pb-[3px] pl-[3px]">
                            <PanelTool name="brush" />
                            <PanelTool name="addGroup" />
                            <PanelTool name="eye" />
                            <PanelTool name="funnelMenu" />
                            <PanelTool name="expression" />
                            <Drop />
                            <PanelTool name="expand" />
                            <PanelTool name="collapse" />
                            <PanelTool name="removeLayer" />
                        </div>
                        <ul className="min-h-0 flex-1 border border-[#b5b5b5] bg-white font-bold">
                            <li className="flex h-[18px] items-center bg-[#ededed] pl-6">
                                <CheckBox label="PT Berkah" checked={visible.shp} onChange={() => toggleLayer('shp')} />
                                <span className="ml-[6px] h-4 w-4 border border-[#5c3b5f] bg-[#996699]" />
                                <span className="ml-[6px] underline">PT Berkah</span>
                            </li>
                            <li className="flex h-[18px] items-center pl-6">
                                <CheckBox label="PT Berkah PT Berkah.kmz" checked={visible.kmz} onChange={() => toggleLayer('kmz')} />
                                <Icon name="polygon" size={16} className="ml-[6px]" />
                                <span className="ml-[6px]">PT Berkah PT Berkah.kmz</span>
                            </li>
                        </ul>
                    </section>
                </aside>

                <div className="flex w-[6px] shrink-0 items-center justify-center">
                    <span className="h-4 border-l-2 border-dotted border-[#c4c4c4]" />
                </div>

                <section className="flex min-w-0 flex-1 flex-col border-r border-b border-l border-[#b5b5b5] bg-white">
                    {showMessage && (
                        <div role="status" className="flex h-[31px] shrink-0 items-center border-y border-[#8fa486] bg-[#dcedd2] pt-[2px] pr-[21px] pl-[9px]">
                            <svg width="22" height="18" viewBox="0 0 22 18" className="mr-[10px] shrink-0">
                                <path d="M.5 4.500l6 4.500L21.500.5 6.500 16.500z" fill="#21c321" stroke="#0b5c0b" strokeLinejoin="round" />
                            </svg>
                            <p className="flex-1 text-[11px]">
                                <b className="text-xs">Layer Exported:</b> Successfully saved vector layer to{' '}
                                <a href="#export" className="text-[#258a0a] underline">C:\Users\User\Desktop\PT Berkah.shp</a>
                            </p>
                            <button type="button" aria-label="Close message" onClick={() => setShowMessage(false)}>
                                <svg width="16" height="16" viewBox="0 0 16 16">
                                    <circle cx="8" cy="8" r="8" fill="#222" />
                                    <path d="M5 5l6 6M11 5l-6 6" stroke="#fff" strokeWidth="2.600" />
                                </svg>
                            </button>
                        </div>
                    )}
                    <svg viewBox="0 0 1013 476" preserveAspectRatio="xMidYMin slice" className="min-h-0 w-full flex-1">
                        <path d="M269-20L295 464.500h450L735-20z" fill="#e56581" stroke="#2b2326" strokeWidth="1.300" />
                    </svg>
                </section>
            </main>

            <footer className="flex h-7 shrink-0 items-center overflow-hidden pt-[2px] text-[11px] whitespace-nowrap">
                <label className="ml-1 flex h-[21px] w-[217px] shrink-0 items-center rounded-[3px] border border-[#b0b0b0] bg-white pl-2 text-xs">
                    <svg width="13" height="13" viewBox="0 0 13 13" fill="none" stroke="#777" strokeWidth="1.200" className="mr-2 shrink-0">
                        <circle cx="5" cy="5" r="4" />
                        <path d="M8 8l4.500 4.500" />
                    </svg>
                    <input aria-label="Locate" placeholder="Type to locate (Ctrl+K)" className="min-w-0 flex-1 bg-transparent outline-none placeholder:text-[#777]" />
                </label>
                <span className="ml-2 flex-1">1 legend entries removed.</span>

                <label htmlFor="coordinate">Coordinate</label>
                <input id="coordinate" defaultValue="106.7998470,-6.2251680" className="ml-1 h-5 w-[149px] rounded-[2px] border border-[#b0b0b0] bg-white pl-[5px] text-xs outline-none" />
                <button type="button" aria-label="Toggle extents" className="ml-1">
                    <svg width="17" height="16" viewBox="0 0 17 16" fill="none" stroke="#222">
                        <path d="M2 3l6 5M5 1l4 7M8 1l2 6M1 7l5 3M12 5l4-3" strokeWidth="1.500" />
                        <ellipse cx="9" cy="11" rx="5" ry="4" fill="#fff" strokeWidth="1.500" />
                        <circle cx="9" cy="11" r="1.500" fill="#222" />
                    </svg>
                </button>
                <label htmlFor="scale" className="ml-3">Scale</label>
                <div className="relative ml-[3px] flex h-5 w-[85px] shrink-0 items-center text-xs">
                    <select id="scale" className="h-5 w-full appearance-none rounded-[2px] border border-[#b0b0b0] bg-white pl-[3px] outline-none">
                        <option>1:151</option>
                        <option>1:500</option>
                        <option>1:1000</option>
                    </select>
                    <span className="pointer-events-none absolute right-0 flex h-5 w-5 items-center justify-center border-l border-[#c0c0c0]">
                        <Caret />
                    </span>
                </div>
                <button type="button" aria-label="Lock scale" className="ml-3">
                    <svg width="13" height="15" viewBox="0 0 13 15" fill="none">
                        <path d="M3 7V4.500a3.500 3.500 0 0 1 7 0V7" stroke="#777" strokeWidth="1.800" />
                        <rect y="6.500" width="13" height="8.500" rx="1" fill="#505050" />
                    </svg>
                </button>
                <label htmlFor="magnifier" className="ml-2">Magnifier</label>
                <SpinBox id="magnifier" value={magnifier} onChange={(e) => setMagnifier(e.target.value)} focused className="ml-[3px] w-[85px]" />
                <label htmlFor="rotation" className="ml-[10px]">Rotation</label>
                <SpinBox id="rotation" value={rotation} onChange={(e) => setRotation(e.target.value)} className="mr-[7px] ml-2 w-[84px]" />
                <CheckBox checked={render} onChange={() => setRender(!render)}>Render</CheckBox>
                <button type="button" className="ml-[14px] flex items-center gap-px text-xs">
                    <svg width="17" height="15" viewBox="0 0 17 15" fill="none" stroke="#555">
                        <ellipse cx="8.500" cy="7.500" rx="7" ry="6.500" fill="#aaa" />
                        <path d="M0 7.500h17M3 3.500h11M3 11.500h11M8.500 1v13M5.500 2c-2 4-2 7 0 11M11.500 2c2 4 2 7 0 11" />
                    </svg>
                    EPSG:4326
                </button>
                <button type="button" aria-label="Messages" className="mr-[6px] ml-[23px]">
                    <svg width="17" height="15" viewBox="0 0 17 15">
                        <path d="M8.500 0C13 0 17 2 17 6c0 2-1 4-3 5l1 4-5-3H8.500C4 12 0 10 0 6s4-6 8.500-6z" fill="#4a4a4a" />
                        <path d="M3.500 5h2v2h-2zM7.500 5h2v2h-2zM11.500 5h2v2h-2z" fill="#fff" />
                    </svg>
                </button>
            </footer>
        </div>
    );
};

export default App;
